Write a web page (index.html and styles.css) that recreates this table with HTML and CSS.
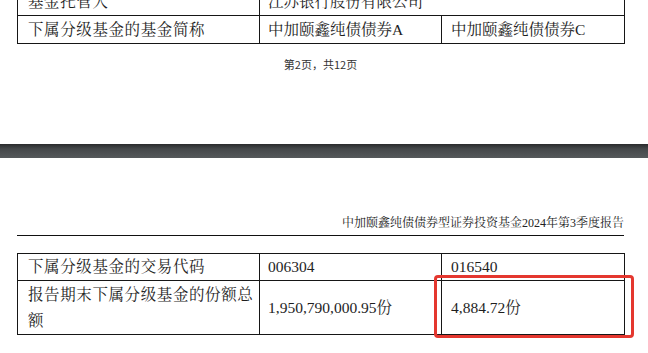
FILE: index.html
```html
<!DOCTYPE html>
<html lang="zh-CN">
<head>
<meta charset="utf-8">
<title>中加颐鑫纯债债券型证券投资基金2024年第3季度报告</title>
<link rel="stylesheet" href="styles.css">
</head>
<body>
<section class="page page-top">
  <table class="grid grid-top">
    <colgroup><col class="c1"><col class="c2"><col class="c3"></colgroup>
    <tr class="r-cut">
      <td class="lbl">基金托管人</td>
      <td colspan="2">江苏银行股份有限公司</td>
    </tr>
    <tr>
      <td class="lbl">下属分级基金的基金简称</td>
      <td>中加颐鑫纯债债券A</td>
      <td class="c3txt">中加颐鑫纯债债券C</td>
    </tr>
  </table>
  <div class="pageno">第2页，共12页</div>
</section>
<div class="gap-bar"></div>
<section class="page page-bottom">
  <div class="running-head">中加颐鑫纯债债券型证券投资基金2024年第3季度报告</div>
  <table class="grid grid-bottom">
    <colgroup><col class="c1"><col class="c2"><col class="c3"></colgroup>
    <tr>
      <td class="lbl">下属分级基金的交易代码</td>
      <td>006304</td>
      <td class="c3txt">016540</td>
    </tr>
    <tr class="r-tall">
      <td class="lbl wrap">报告期末下属分级基金的份额总额</td>
      <td>1,950,790,000.95份</td>
      <td class="c3txt hl">4,884.72份<span class="mark"></span></td>
    </tr>
  </table>
</section>
</body>
</html>
```

FILE: styles.css
```css
* { box-sizing: border-box; }
html, body { margin: 0; padding: 0; background: #fff; }
body {
  width: 648px;
  height: 353px;
  overflow: hidden;
  color: #1e1e1e;
  font-family: "Liberation Serif", "Noto Serif CJK SC", "Noto Sans CJK SC", serif;
}
.page { padding-left: 17px; width: 624px; }
.grid {
  border-collapse: collapse;
  width: 607px;
  table-layout: fixed;
  font-size: 15.5px;
}
.grid col.c1 { width: 242px; }
.grid col.c2 { width: 182px; }
.grid col.c3 { width: 183px; }
.grid td {
  border: 1px solid #161616;
  padding: 0 4px 0 8px;
  height: 28px;
  line-height: 26px;
  vertical-align: middle;
  white-space: nowrap;
}
.grid td.lbl { padding-left: 10px; letter-spacing: 0.6px; }
.grid td.c3txt { padding-left: 9px; }
.grid td.wrap { white-space: normal; }
.grid-top { margin-top: -13px; }
.grid-bottom tr:first-child td { height: 27px; }
.grid-bottom tr.r-tall td { height: 54px; }
.pageno {
  width: 607px;
  text-align: center;
  font-family: "Noto Sans CJK SC", "Liberation Sans", sans-serif;
  font-size: 11px;
  line-height: 16px;
  color: #333;
  margin-top: 12px;
}
.gap-bar {
  margin-top: 72px;
  height: 14px;
  width: 648px;
  background: linear-gradient(#2a2b2c 0%, #45484a 35%, #55595b 100%);
}
.page-bottom { padding-top: 57px; }
.running-head {
  width: 607px;
  text-align: right;
  font-size: 12px;
  line-height: 16px;
  padding-bottom: 4px;
  border-bottom: 1.5px solid #111;
  color: #222;
  margin-bottom: 17px;
}
.hl { position: relative; }
.mark {
  position: absolute;
  left: -8px;
  top: -6px;
  right: -10px;
  bottom: -4px;
  border: 3px solid #e4372f;
  border-radius: 4px;
}
```
